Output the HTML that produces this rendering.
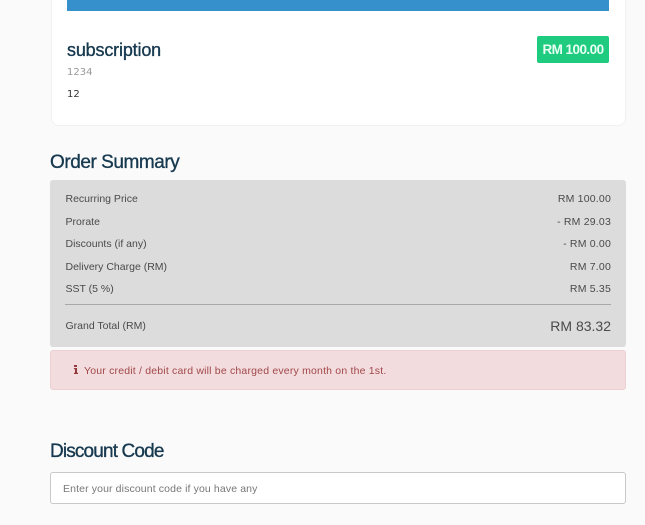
<!DOCTYPE html>
<html>
<head>
<meta charset="utf-8">
<style>
html,body{margin:0;padding:0;width:645px;height:525px;overflow:hidden;background:#fafafa;}
body{position:relative;font-family:"Liberation Sans",sans-serif;}
.a{position:absolute;white-space:nowrap;}
.h{color:#17394f;font-size:19px;line-height:24px;-webkit-text-stroke:.35px #17394f;}
.l{left:65.5px;font-size:10.5px;line-height:14px;color:#4a4a4a;}
.r{right:34px;font-size:10.5px;line-height:14px;color:#4a4a4a;text-align:right;letter-spacing:.2px;}
</style>
</head>
<body>
<div class="a" style="left:51px;top:-10px;width:573px;height:134px;background:#fff;border:1px solid #f1f1f1;border-radius:8px;"></div>
<div class="a" style="left:67px;top:0;width:542px;height:11px;background:#3690cc;"></div>
<div class="a h" style="left:67px;top:38px;font-size:18px;letter-spacing:-.17px;">subscription</div>
<div class="a" style="left:537px;top:36px;width:72px;height:27px;background:#1fcb7f;border-radius:2px;color:#e8fff5;font-size:13.5px;font-weight:bold;line-height:27px;text-align:center;letter-spacing:-.55px;">RM 100.00</div>
<div class="a" style="left:67px;top:66px;font-family:'DejaVu Sans',sans-serif;font-size:10px;line-height:13px;color:#999;">1234</div>
<div class="a" style="left:67px;top:88px;font-family:'DejaVu Sans',sans-serif;font-size:10px;line-height:13px;color:#333;">12</div>

<div class="a h" style="left:50px;top:151px;letter-spacing:-.45px;">Order Summary</div>
<div class="a" style="left:50px;top:180px;width:576px;height:167px;background:#dcdcdc;border-radius:3px;"></div>
<div class="a l" style="top:192px;">Recurring Price</div><div class="a r" style="top:192px;">RM 100.00</div>
<div class="a l" style="top:215px;">Prorate</div><div class="a r" style="top:215px;">- RM 29.03</div>
<div class="a l" style="top:237px;">Discounts (if any)</div><div class="a r" style="top:237px;">- RM 0.00</div>
<div class="a l" style="top:260px;">Delivery Charge (RM)</div><div class="a r" style="top:260px;">RM 7.00</div>
<div class="a l" style="top:282px;">SST (5 %)</div><div class="a r" style="top:282px;">RM 5.35</div>
<div class="a" style="left:65px;top:304px;width:546px;height:1px;background:#a8a8a8;"></div>
<div class="a l" style="top:319px;">Grand Total (RM)</div>
<div class="a r" style="top:318px;font-size:14px;line-height:16px;letter-spacing:0;">RM 83.32</div>

<div class="a" style="left:50px;top:350px;width:574px;height:38px;background:#f3dcde;border:1px solid #ecd0d3;border-radius:3px;"></div>
<div class="a" style="left:74px;top:365px;width:3px;height:2px;background:#94393c;"></div>
<div class="a" style="left:74px;top:368px;width:4px;height:6px;background:#94393c;clip-path:polygon(0 0,75% 0,75% 80%,100% 80%,100% 100%,0 100%,0 80%,25% 80%,25% 20%,0 20%);"></div>
<div class="a" style="left:84px;top:364px;font-size:10.5px;line-height:14px;color:#a0484a;letter-spacing:.19px;">Your credit / debit card will be charged every month on the 1st.</div>

<div class="a h" style="left:50px;top:440px;letter-spacing:-.85px;">Discount Code</div>
<div class="a" style="left:50px;top:472px;width:574px;height:30px;background:#fff;border:1px solid #c9c9c9;border-radius:3px;"></div>
<div class="a" style="left:63px;top:482px;font-size:10.5px;line-height:14px;color:#777;letter-spacing:.12px;">Enter your discount code if you have any</div>
</body>
</html>
